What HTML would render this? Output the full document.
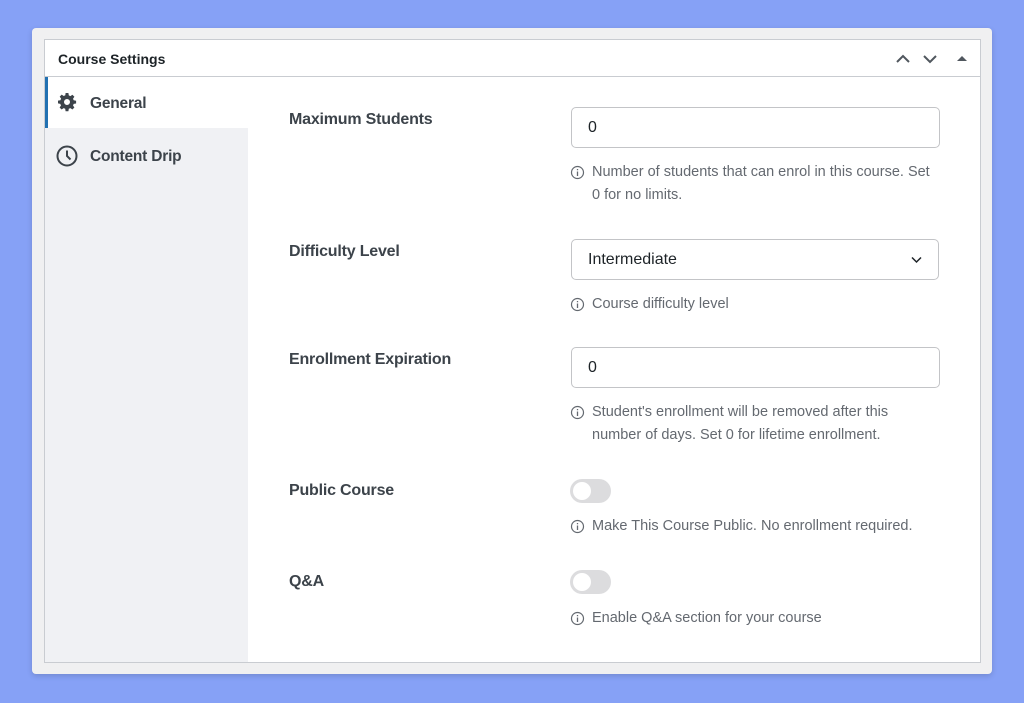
<!DOCTYPE html>
<html><head><meta charset="utf-8"><style>
*{box-sizing:border-box;margin:0;padding:0}
body{width:1024px;height:703px;background:#86a1f6;font-family:"Liberation Sans",sans-serif;position:relative;overflow:hidden}
.a{position:absolute}
.card{left:32px;top:28px;width:960px;height:646px;background:#f0f0f1;border-radius:4px;box-shadow:0 2px 6px rgba(0,0,0,.15)}
.panel{left:44px;top:39px;width:937px;height:624px;background:#fff;border:1px solid #c9ccd1}
.lbl{left:289px;font-size:16px;color:#3c434a;font-weight:bold;letter-spacing:-.2px}
.inp{left:571px;width:369px;height:41px;border:1px solid #c3c4c7;border-radius:5px;font-size:16px;color:#1d2327;padding:11px 16px}
.help{left:570px;font-size:14.5px;color:#646970;line-height:23px;padding-left:22px}
.help svg{position:absolute;left:0;top:4px}
.tog{left:570px;width:41px;height:24px;border-radius:12px;background:#dcdcde}
.tog:after{content:"";position:absolute;left:3px;top:3px;width:18px;height:18px;border-radius:50%;background:#fff}
.tab{font-size:15.5px;color:#3c434a;font-weight:bold;letter-spacing:-.2px}
</style></head><body>
<div class="a card"></div>
<div class="a panel"></div>
<div class="a" style="left:58px;top:51px;font-size:14px;font-weight:bold;color:#1d2327">Course Settings</div>
<svg class="a" style="left:895px;top:52px" width="80" height="14"><path d="M2 10 L8 4 L14 10" stroke="#50575e" stroke-width="2" fill="none"/><path d="M29 4 L35 10 L41 4" stroke="#50575e" stroke-width="2" fill="none"/><path d="M62 9 L67 4 L72 9Z" fill="#50575e"/></svg>
<div class="a" style="left:45px;top:76px;width:935px;height:1px;background:#c9ccd1"></div>
<div class="a" style="left:45px;top:77px;width:203px;height:585px;background:#f0f1f4"></div>
<div class="a" style="left:45px;top:77px;width:203px;height:51px;background:#fff;border-left:3px solid #2271b1"></div>
<svg class="a" style="left:57px;top:92px" width="20" height="20" viewBox="0 0 20 20"><path fill="#3c434a" d="M8.6 1h2.8l.4 2.4 1.6.7 2-1.4 2 2-1.4 2 .7 1.6 2.4.4v2.8l-2.4.4-.7 1.6 1.4 2-2 2-2-1.4-1.6.7-.4 2.4H8.6l-.4-2.4-1.6-.7-2 1.4-2-2 1.4-2-.7-1.6L1 11.4V8.6l2.4-.4.7-1.6-1.4-2 2-2 2 1.4 1.6-.7zM10 7a3 3 0 100 6 3 3 0 000-6z"/></svg>
<div class="a tab" style="left:90px;top:95px">General</div>
<svg class="a" style="left:56px;top:145px" width="22" height="22" viewBox="0 0 22 22"><circle cx="11" cy="11" r="9.5" stroke="#3c434a" stroke-width="2" fill="none"/><path d="M11 5.5V11l3.5 3.5" stroke="#3c434a" stroke-width="2" fill="none"/></svg>
<div class="a tab" style="left:90px;top:148px">Content Drip</div>

<div class="a lbl" style="top:111px">Maximum Students</div>
<div class="a inp" style="top:107px">0</div>
<div class="a help" style="top:161px">
<svg width="15" height="15"><circle cx="7.5" cy="7.5" r="6" stroke="#646970" fill="none" stroke-width="1.2"/><path d="M7.5 6.5v4.5M7.5 4v1.3" stroke="#646970" stroke-width="1.3"/></svg>Number of students that can enrol in this course. Set<br>0 for no limits.</div>

<div class="a lbl" style="top:243px">Difficulty Level</div>
<div class="a inp" style="top:239px;width:368px">Intermediate
<svg class="a" style="right:16px;top:16px" width="11" height="8"><path d="M1 1.5l4.5 4.5 4.5-4.5" stroke="#1d2327" stroke-width="1.5" fill="none"/></svg></div>
<div class="a help" style="top:293px">
<svg width="15" height="15"><circle cx="7.5" cy="7.5" r="6" stroke="#646970" fill="none" stroke-width="1.2"/><path d="M7.5 6.5v4.5M7.5 4v1.3" stroke="#646970" stroke-width="1.3"/></svg>Course difficulty level</div>

<div class="a lbl" style="top:351px">Enrollment Expiration</div>
<div class="a inp" style="top:347px">0</div>
<div class="a help" style="top:401px">
<svg width="15" height="15"><circle cx="7.5" cy="7.5" r="6" stroke="#646970" fill="none" stroke-width="1.2"/><path d="M7.5 6.5v4.5M7.5 4v1.3" stroke="#646970" stroke-width="1.3"/></svg>Student's enrollment will be removed after this<br>number of days. Set 0 for lifetime enrollment.</div>

<div class="a lbl" style="top:482px">Public Course</div>
<div class="a tog" style="top:479px"></div>
<div class="a help" style="top:515px">
<svg width="15" height="15"><circle cx="7.5" cy="7.5" r="6" stroke="#646970" fill="none" stroke-width="1.2"/><path d="M7.5 6.5v4.5M7.5 4v1.3" stroke="#646970" stroke-width="1.3"/></svg>Make This Course Public. No enrollment required.</div>

<div class="a lbl" style="top:573px">Q&amp;A</div>
<div class="a tog" style="top:570px"></div>
<div class="a help" style="top:607px">
<svg width="15" height="15"><circle cx="7.5" cy="7.5" r="6" stroke="#646970" fill="none" stroke-width="1.2"/><path d="M7.5 6.5v4.5M7.5 4v1.3" stroke="#646970" stroke-width="1.3"/></svg>Enable Q&amp;A section for your course</div>
</body></html>
